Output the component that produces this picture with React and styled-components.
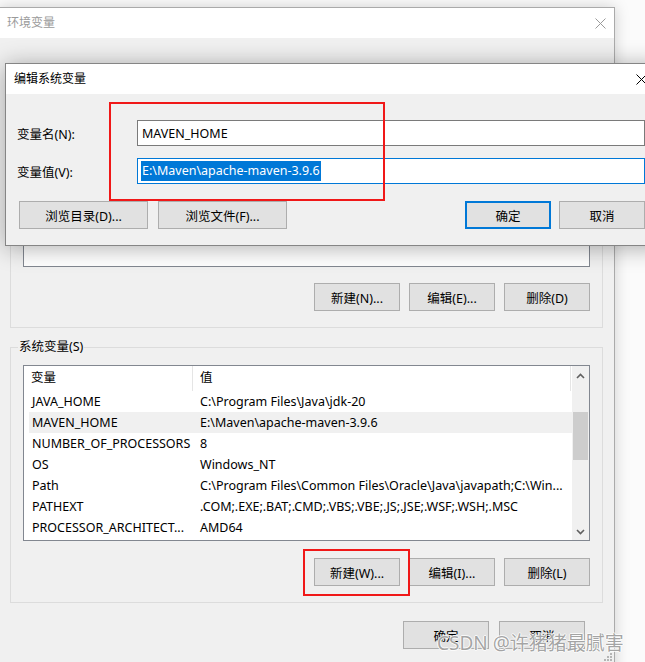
import styled, { createGlobalStyle } from "styled-components";

const GlobalStyle = createGlobalStyle`
  * {
    box-sizing: border-box;
  }
  html,
  body {
    margin: 0;
    padding: 0;
    background: #fbfbfb;
  }
  body {
    font-family: "Noto Sans", "Noto Sans CJK SC", sans-serif;
    font-size: 12.5px;
    color: #000;
  }
`;

const Desktop = styled.div`
  position: relative;
  width: 645px;
  height: 662px;
  overflow: hidden;
  background: #fbfbfb;
`;

const EnvWindow = styled.div`
  position: absolute;
  left: -1px;
  top: 7px;
  width: 616px;
  height: 670px;
  border: 1px solid #aaaaaa;
  background: #f0f0f0;
  box-shadow: 0 0 14px rgba(0, 0, 0, 0.18);
  display: flex;
  flex-direction: column;
`;

const TitleBar = styled.div`
  height: 30px;
  flex: none;
  background: #fff;
  display: flex;
  align-items: center;
  padding-left: ${(p) => p.$pl}px;
  color: ${(p) => (p.$muted ? "#9a9a9a" : "#000")};
`;

const TitleText = styled.div`
  flex: 1;
  line-height: 30px;
  font-size: 12px;
`;

const CloseBox = styled.div`
  width: ${(p) => p.$w}px;
  height: 30px;
  display: flex;
  align-items: center;
  justify-content: center;
  color: ${(p) => (p.$muted ? "#9a9a9a" : "#000")};
`;

const EnvBody = styled.div`
  display: flex;
  flex-direction: column;
  padding: 0 11px 0 10px;
`;

const GroupBox = styled.div`
  position: relative;
  margin-top: ${(p) => p.$mt}px;
  border: 1px solid #dcdcdc;
  padding: ${(p) => p.$pt}px 12px 16px 12px;
  display: flex;
  flex-direction: column;
`;

const Legend = styled.span`
  position: absolute;
  left: 7px;
  top: -9px;
  padding: 0 1px;
  line-height: 16px;
  background: #f0f0f0;
`;

const ListBox = styled.div`
  height: ${(p) => p.$h}px;
  border: 1px solid #828790;
  background: #fff;
  display: flex;
`;

const ListMain = styled.div`
  flex: 1;
  display: flex;
  flex-direction: column;
  overflow: hidden;
`;

const HeaderRow = styled.div`
  display: flex;
  height: 25px;
  flex: none;
`;

const HeaderCell = styled.div`
  width: ${(p) => p.$w}px;
  padding-left: 7px;
  line-height: 24px;
  border-right: 1px solid #e5e5e5;
`;

const Row = styled.div`
  display: flex;
  height: 21px;
  flex: none;
  margin-left: 5px;
  background: ${(p) => (p.$selected ? "#f0f0f0" : "transparent")};
`;

const Cell = styled.div`
  width: ${(p) => (p.$w ? `${p.$w}px` : "auto")};
  flex: ${(p) => (p.$w ? "none" : "1")};
  padding-left: ${(p) => p.$pad}px;
  line-height: 21px;
  white-space: nowrap;
  overflow: hidden;
`;

const ScrollBar = styled.div`
  width: 17px;
  flex: none;
  background: #f0f0f0;
  display: flex;
  flex-direction: column;
`;

const ScrollArrow = styled.div`
  height: 17px;
  flex: none;
  display: flex;
  align-items: center;
  justify-content: center;
  padding-top: ${(p) => (p.$down ? 0 : 3)}px;
`;

const ScrollTrack = styled.div`
  flex: 1;
  display: flex;
  flex-direction: column;
`;

const Thumb = styled.div`
  margin: ${(p) => p.$top}px 1px 0 1px;
  height: ${(p) => p.$h}px;
  background: #cdcdcd;
`;

const ButtonRow = styled.div`
  display: flex;
  justify-content: flex-end;
  gap: ${(p) => p.$gap}px;
  margin-top: ${(p) => p.$mt}px;
  padding-right: ${(p) => p.$pr || 0}px;
`;

const Button = styled.div`
  width: ${(p) => p.$w}px;
  height: 28px;
  flex: none;
  display: flex;
  align-items: center;
  justify-content: center;
  background: #e1e1e1;
  border: ${(p) => (p.$primary ? "2px solid #0078d7" : "1px solid #adadad")};
  white-space: nowrap;
`;

const EditDialog = styled.div`
  position: absolute;
  left: 5px;
  top: 63px;
  width: 660px;
  height: 183px;
  border: 1px solid #858585;
  background: #f0f0f0;
  box-shadow: 0 2px 22px rgba(0, 0, 0, 0.32);
  display: flex;
  flex-direction: column;
`;

const DialogBody = styled.div`
  display: flex;
  flex-direction: column;
  padding: 26px 19px 16px 11px;
`;

const FieldRow = styled.div`
  display: flex;
  align-items: center;
  margin-top: ${(p) => p.$mt || 0}px;
`;

const FieldLabel = styled.div`
  width: 120px;
  flex: none;
`;

const TextBox = styled.div`
  flex: 1;
  height: 26px;
  background: #fff;
  border: 1px solid ${(p) => (p.$focused ? "#0078d7" : "#7a7a7a")};
  padding-left: ${(p) => (p.$focused ? 3 : 4)}px;
  display: flex;
  align-items: center;
  white-space: nowrap;
`;

const Selection = styled.span`
  background: #0078d7;
  color: #fff;
  line-height: 20px;
  padding: 0 1px;
`;

const DialogButtons = styled.div`
  display: flex;
  margin-top: 17px;
  padding-left: 2px;
  gap: 10px;
`;

const Spacer = styled.div`
  flex: 1;
`;

const ConfirmPair = styled.div`
  display: flex;
  gap: 8px;
  margin-left: -2px;
`;

const Mark = styled.div`
  position: absolute;
  left: ${(p) => p.$x}px;
  top: ${(p) => p.$y}px;
  width: ${(p) => p.$w}px;
  height: ${(p) => p.$h}px;
  border: 2px solid #f01818;
  pointer-events: none;
`;

const Watermark = styled.div`
  position: absolute;
  left: 437px;
  top: 631px;
  font-size: 19px;
  line-height: 24px;
  white-space: nowrap;
  color: rgba(135, 135, 135, 0.75);
  text-shadow: 1px 0 0 rgba(255, 255, 255, 0.8), -1px 0 0 rgba(255, 255, 255, 0.8),
    0 1px 0 rgba(255, 255, 255, 0.8), 0 -1px 0 rgba(255, 255, 255, 0.8);
`;

const Grip = styled.svg`
  position: absolute;
  left: 602px;
  top: 651px;
`;

const systemVars = [
  ["JAVA_HOME", "C:\\Program Files\\Java\\jdk-20"],
  ["MAVEN_HOME", "E:\\Maven\\apache-maven-3.9.6", true],
  ["NUMBER_OF_PROCESSORS", "8"],
  ["OS", "Windows_NT"],
  ["Path", "C:\\Program Files\\Common Files\\Oracle\\Java\\javapath;C:\\Win..."],
  ["PATHEXT", ".COM;.EXE;.BAT;.CMD;.VBS;.VBE;.JS;.JSE;.WSF;.WSH;.MSC"],
  ["PROCESSOR_ARCHITECT...", "AMD64"],
];

const CloseIcon = () => (
  <svg width="11" height="11" viewBox="0 0 11 11">
    <path d="M0.5 0.5L10.5 10.5M10.5 0.5L0.5 10.5" stroke="currentColor" strokeWidth="1" fill="none" />
  </svg>
);

const Chevron = ({ down }) => (
  <svg width="9" height="6" viewBox="0 0 9 6">
    <path
      d={down ? "M1 1L4.5 4.5L8 1" : "M1 5L4.5 1.5L8 5"}
      stroke="#606060"
      strokeWidth="1.6"
      fill="none"
    />
  </svg>
);

// the user list sits behind the edit dialog; only its blank bottom shows
const VarList = ({ height, rows, scroll }) => (
  <ListBox $h={height}>
    <ListMain>
      {rows.length > 0 && (
        <HeaderRow>
          <HeaderCell $w={169}>变量</HeaderCell>
          <HeaderCell $w={378}>值</HeaderCell>
        </HeaderRow>
      )}
      {rows.map(([name, value, selected]) => (
        <Row key={name} $selected={selected}>
          <Cell $w={164} $pad={3}>
            {name}
          </Cell>
          <Cell $pad={7}>{value}</Cell>
        </Row>
      ))}
    </ListMain>
    {scroll && (
      <ScrollBar>
        <ScrollArrow>
          <Chevron />
        </ScrollArrow>
        <ScrollTrack>
          <Thumb $top={29} $h={48} />
        </ScrollTrack>
        <ScrollArrow $down>
          <Chevron down />
        </ScrollArrow>
      </ScrollBar>
    )}
  </ListBox>
);

export default function App() {
  return (
    <>
      <GlobalStyle />
      <Desktop>
        <EnvWindow>
          <TitleBar $muted $pl={7}>
            <TitleText>环境变量</TitleText>
            <CloseBox $muted $w={28}>
              <CloseIcon />
            </CloseBox>
          </TitleBar>
          <EnvBody>
            <GroupBox $mt={34} $pt={18}>
              <VarList height={176} rows={[]} />
              <ButtonRow $gap={9} $mt={16}>
                <Button $w={86}>新建(N)...</Button>
                <Button $w={86}>编辑(E)...</Button>
                <Button $w={86}>删除(D)</Button>
              </ButtonRow>
            </GroupBox>
            <GroupBox $mt={19} $pt={17}>
              <Legend>系统变量(S)</Legend>
              <VarList height={176} rows={systemVars} scroll />
              <ButtonRow $gap={9} $mt={17}>
                <Button $w={86}>新建(W)...</Button>
                <Button $w={86}>编辑(I)...</Button>
                <Button $w={86}>删除(L)</Button>
              </ButtonRow>
            </GroupBox>
            <ButtonRow $gap={10} $mt={18} $pr={18}>
              <Button $w={86}>确定</Button>
              <Button $w={86}>取消</Button>
            </ButtonRow>
          </EnvBody>
        </EnvWindow>

        <EditDialog>
          <TitleBar $pl={8}>
            <TitleText>编辑系统变量</TitleText>
            <CloseBox $w={46}>
              <CloseIcon />
            </CloseBox>
          </TitleBar>
          <DialogBody>
            <FieldRow>
              <FieldLabel>变量名(N):</FieldLabel>
              <TextBox>MAVEN_HOME</TextBox>
            </FieldRow>
            <FieldRow $mt={12}>
              <FieldLabel>变量值(V):</FieldLabel>
              <TextBox $focused>
                <Selection>E:\Maven\apache-maven-3.9.6</Selection>
              </TextBox>
            </FieldRow>
            <DialogButtons>
              <Button $w={129}>浏览目录(D)...</Button>
              <Button $w={129}>浏览文件(F)...</Button>
              <Spacer />
              <ConfirmPair>
                <Button $w={86} $primary>
                  确定
                </Button>
                <Button $w={86}>取消</Button>
              </ConfirmPair>
            </DialogButtons>
          </DialogBody>
        </EditDialog>

        <Mark $x={109} $y={102} $w={276} $h={99} />
        <Mark $x={303} $y={549} $w={107} $h={47} />

        <Watermark>CSDN @许猪猪最腻害</Watermark>
        <Grip width="11" height="11" viewBox="0 0 11 11">
          <g fill="#b5b5b5">
            <rect x="8" y="2" width="2" height="2" />
            <rect x="5" y="5" width="2" height="2" />
            <rect x="8" y="5" width="2" height="2" />
            <rect x="2" y="8" width="2" height="2" />
            <rect x="5" y="8" width="2" height="2" />
            <rect x="8" y="8" width="2" height="2" />
          </g>
        </Grip>
      </Desktop>
    </>
  );
}
